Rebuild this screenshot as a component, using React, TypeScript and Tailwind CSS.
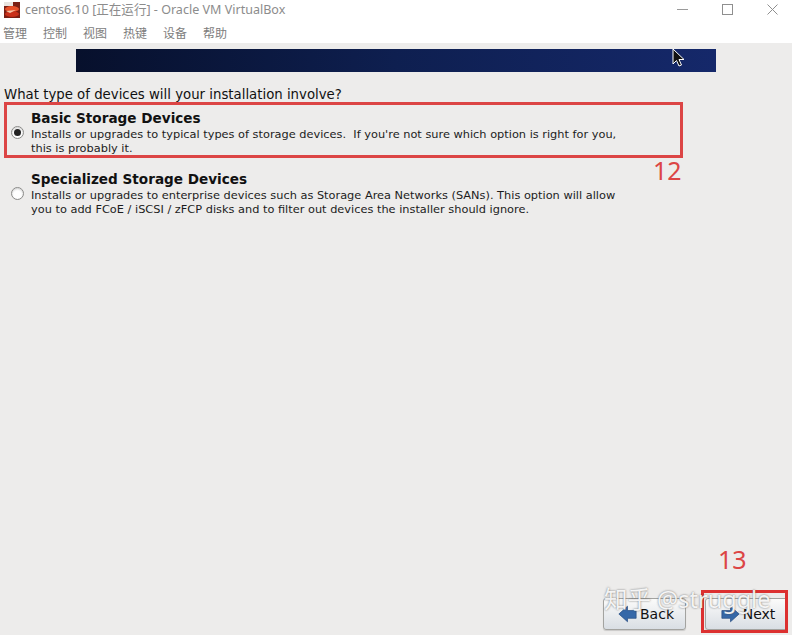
const dejavu = "font-['DejaVu_Sans',sans-serif]";

function StorageOption({
  selected,
  title,
  lines,
}: {
  selected?: boolean;
  title: string;
  lines: string[];
}) {
  return (
    <div className="flex items-start">
      <div className="flex w-[31px] shrink-0 justify-center pt-[16px] pl-[4px]">
        <span className="flex size-[13px] items-center justify-center rounded-full border border-[#8a8a88] bg-white shadow-[inset_0_1px_2px_rgba(0,0,0,0.2)]">
          {selected && <span className="size-[7px] rounded-full bg-[#222]" />}
        </span>
      </div>
      <div>
        <p className="h-[17px] text-[13.6px] leading-[17px] font-bold whitespace-pre text-[#111]">{title}</p>
        {lines.map((line) => (
          <p key={line} className="h-[14px] text-[11.35px] leading-[14px] whitespace-pre text-[#1c1c1c]">
            {line}
          </p>
        ))}
      </div>
    </div>
  );
}

function NavButton({ label, flip }: { label: string; flip?: boolean }) {
  return (
    <button
      type="button"
      className="flex h-[32px] w-[83px] items-center justify-center gap-[3px] rounded-[3px] border border-[#a3a3a0] bg-gradient-to-b from-[#fbfbfa] to-[#d9dee4] pl-[3px] text-[14px] text-[#111] shadow-[0_1px_1px_rgba(0,0,0,0.15)]"
    >
      <svg width="19" height="18" viewBox="0 0 22 20" className={flip ? "-scale-x-100" : ""}>
        <path d="M1 10 L11 1 V6 H21 V15 H11 V19 Z" fill="#3668a8" stroke="#244b80" strokeWidth="0.8" />
      </svg>
      <span>{label}</span>
    </button>
  );
}

export default function App() {
  return (
    <div className={`relative flex h-[635px] w-[792px] flex-col overflow-hidden bg-[#edeceb] ${dejavu}`}>
      <header className="h-[43px] shrink-0 bg-white">
        <div className="flex h-[21px] items-center">
          <svg width="16" height="16" viewBox="0 0 16 16" className="mt-[-1px] ml-[4px]">
            <rect width="16" height="16" fill="#7a1f14" />
            <rect width="9" height="4" fill="#e8e4e0" />
            <ellipse cx="8" cy="7" rx="7" ry="3" fill="#e8512a" />
            <ellipse cx="8" cy="12" rx="7" ry="3" fill="#c9301a" />
            <path d="M2 9 L12 8 L6 11 Z" fill="#f6c7a8" />
          </svg>
          <span className="ml-[5px] font-['Noto_Sans','Noto_Sans_CJK_SC',sans-serif] text-[12.55px] text-[#8c8c8c]">
            centos6.10 [正在运行] - Oracle VM VirtualBox
          </span>
          <div className="ml-auto flex items-center gap-[34px] pr-[14px]">
            <svg width="11" height="11" viewBox="0 0 11 11" className="mt-[-2px]">
              <path d="M0 5.5 H11" stroke="#9a9a9a" />
            </svg>
            <svg width="11" height="11" viewBox="0 0 11 11" className="mt-[-2px]">
              <rect x="0.5" y="0.5" width="10" height="10" fill="none" stroke="#8f8f8f" />
            </svg>
            <svg width="11" height="11" viewBox="0 0 11 11" className="mt-[-2px]">
              <path d="M0.5 0.5 L10.5 10.5 M10.5 0.5 L0.5 10.5" stroke="#8f8f8f" />
            </svg>
          </div>
        </div>
        <nav className="flex h-[24px] items-center gap-[16px] pl-[3px] font-['Noto_Sans_CJK_SC',sans-serif] text-[12px] text-[#7d7d7d]">
          {["管理", "控制", "视图", "热键", "设备", "帮助"].map((item) => (
            <span key={item} className="w-[24px]">
              {item}
            </span>
          ))}
        </nav>
      </header>

      <div className="flex justify-center pt-[6px]">
        <div className="h-[23px] w-[640px] bg-gradient-to-r from-[#07102c] via-[#0e1f50] to-[#15286a]" />
      </div>

      <p className="mt-[14px] pl-[4px] text-[13.3px] leading-[17px] text-[#111]">
        What type of devices will your installation involve?
      </p>

      <div className="mt-[7px] flex flex-col gap-[16px]">
        <StorageOption
          selected
          title="Basic Storage Devices"
          lines={[
            "Installs or upgrades to typical types of storage devices.  If you're not sure which option is right for you,",
            "this is probably it.",
          ]}
        />
        <StorageOption
          title="Specialized Storage Devices"
          lines={[
            "Installs or upgrades to enterprise devices such as Storage Area Networks (SANs). This option will allow",
            "you to add FCoE / iSCSI / zFCP disks and to filter out devices the installer should ignore.",
          ]}
        />
      </div>

      <footer className="mt-auto flex justify-end gap-[19px] pr-[4px] pb-[5px]">
        <NavButton label="Back" />
        <NavButton label="Next" flip />
      </footer>

      {/* annotations drawn over the screenshot */}
      <div className="absolute top-[102px] left-[4px] h-[56px] w-[679px] border-[3px] border-[#dc4545]" />
      <span className="absolute top-[154px] left-[653px] font-['Noto_Sans',sans-serif] text-[25px] leading-[32px] text-[#dc4545]">12</span>
      <div className="absolute top-[590px] left-[701px] h-[43px] w-[87px] border-[3px] border-[#dc3030]" />
      <span className="absolute top-[543px] left-[718px] font-['Noto_Sans',sans-serif] text-[25px] leading-[32px] text-[#dc4545]">13</span>
      <span className="absolute top-[583px] left-[604px] font-['Noto_Sans','Noto_Sans_CJK_SC',sans-serif] text-[23.5px] leading-[32px] text-white/90 [text-shadow:0_0_2px_rgba(70,70,70,0.8)]">
        知乎 @struggle
      </span>
      <svg width="14" height="20" viewBox="0 0 14 20" className="absolute top-[48px] left-[672px]">
        <path d="M1 1 V16 L4.5 12.5 L7 18 L9.5 17 L7 11.5 H12 Z" fill="#111" stroke="#fff" strokeWidth="1" />
      </svg>
    </div>
  );
}
